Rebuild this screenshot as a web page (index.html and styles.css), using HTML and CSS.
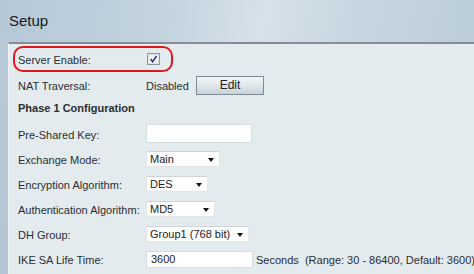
FILE: index.html
```html
<!DOCTYPE html>
<html>
<head>
<meta charset="utf-8">
<link rel="stylesheet" href="styles.css">
</head>
<body>
<div class="header"><h1 class="title">Setup</h1></div>
<div class="frame">
  <div class="panel">
    <div class="highlight"></div>
    <div class="row r1">
      <div class="label">Server Enable:</div>
      <div class="value">
        <svg class="check" width="13" height="12" viewBox="0 0 13 12">
          <rect x="0.5" y="0.5" width="12" height="11" fill="#f1f3f6" stroke="#8f979e"/>
          <rect x="1.5" y="1.5" width="10" height="9" fill="none" stroke="#dfe3e8"/>
          <path d="M3.5 6 L5.6 8.6 L9.6 3" fill="none" stroke="#2b3a8c" stroke-width="1.6"/>
        </svg>
      </div>
    </div>
    <div class="row r2">
      <div class="label">NAT Traversal:</div>
      <div class="value"><span class="disabled">Disabled</span><span class="btn">Edit</span></div>
    </div>
    <div class="row r3">
      <div class="label bold">Phase 1 Configuration</div>
    </div>
    <div class="row r4">
      <div class="label">Pre-Shared Key:</div>
      <div class="value"><span class="input w106"></span></div>
    </div>
    <div class="row">
      <div class="label">Exchange Mode:</div>
      <div class="value"><span class="select w74"><span>Main</span><i class="arrow"></i></span></div>
    </div>
    <div class="row">
      <div class="label">Encryption Algorithm:</div>
      <div class="value"><span class="select w62"><span>DES</span><i class="arrow"></i></span></div>
    </div>
    <div class="row">
      <div class="label">Authentication Algorithm:</div>
      <div class="value"><span class="select w69"><span>MD5</span><i class="arrow"></i></span></div>
    </div>
    <div class="row">
      <div class="label">DH Group:</div>
      <div class="value"><span class="select w103"><span>Group1 (768 bit)</span><i class="arrow"></i></span></div>
    </div>
    <div class="row">
      <div class="label">IKE SA Life Time:</div>
      <div class="value"><span class="input w107 txt">3600</span><span class="hint">Seconds&nbsp; (Range: 30 - 86400, Default: 3600)</span></div>
    </div>
  </div>
</div>
</body>
</html>
```
FILE: styles.css
```css
html, body {
  margin: 0;
  padding: 0;
  width: 474px;
  height: 274px;
  overflow: hidden;
  font-family: "Liberation Sans", Arial, sans-serif;
  background: #b9cad8;
}
.header {
  height: 42px;
  background: linear-gradient(100deg, #b6c8d7 0%, #c3d3df 35%, #d6e2ea 55%, #c6d5e0 75%, #bccdda 100%);
  box-sizing: border-box;
  padding: 13px 0 0 9px;
}
.title {
  margin: 0;
  font-size: 15px;
  font-weight: normal;
  color: #151a1e;
  line-height: 16px;
}
.frame {
  display: flex;
  height: 232px;
  padding-left: 8px;
  background: linear-gradient(180deg, #b8c9d7, #b3c5d4);
}
.panel {
  position: relative;
  flex: 1;
  margin-right: 3px;
  background: #e4ebee;
  border-top: 2px solid #858e96;
  border-left: 1px solid #eef2f4;
  box-sizing: border-box;
  padding-top: 3px;
  color: #2a2e32;
  font-size: 11px;
}
.highlight {
  position: absolute;
  left: 4px;
  top: 2px;
  width: 156px;
  height: 22px;
  border: 2px solid #e0161f;
  border-radius: 10px;
}
.row {
  display: flex;
  align-items: center;
  height: 25px;
}
.r1 { height: 26px; }
.r3 { height: 20px; }
.r4 { margin-top: 4px; }
.label {
  width: 128px;
  padding-left: 9px;
  white-space: nowrap;
}
.bold { font-weight: bold; }
.value {
  display: flex;
  align-items: center;
}
.check { display: block; margin-left: 1px; margin-top: -2px; }
.disabled { width: 50px; }
.btn {
  display: flex;
  align-items: center;
  justify-content: center;
  width: 66px;
  height: 17px;
  border: 1px solid #7f8b94;
  background: linear-gradient(180deg, #f4f7f9 0%, #dfe6eb 50%, #c9d3da 100%);
  color: #1e2226;
  font-size: 12px;
  margin-top: -1px;
}
.input {
  display: block;
  height: 17px;
  background: #fff;
  border: 1px solid #d6dde2;
  box-sizing: border-box;
}
.input.txt {
  height: 17px;
  padding-left: 4px;
  line-height: 15px;
  color: #222;
}
.w106 { width: 106px; margin-top: -2px; height: 19px; }
.w107 { width: 107px; }
.select {
  display: flex;
  align-items: center;
  justify-content: space-between;
  height: 16px;
  background: #fff;
  border: 1px solid #e2e6e9;
  border-top-color: #cfd5da;
  box-sizing: border-box;
  padding: 0 5px 0 3px;
  color: #222;
  margin-top: -2px;
}
.w74 { width: 74px; }
.w62 { width: 62px; }
.w69 { width: 69px; }
.w103 { width: 103px; }
.arrow {
  display: block;
  width: 0;
  height: 0;
  border-left: 3px solid transparent;
  border-right: 3px solid transparent;
  border-top: 4px solid #111;
  margin-top: 2px;
}
.hint {
  margin-left: 3px;
  color: #2a2e32;
  white-space: nowrap;
}
```
